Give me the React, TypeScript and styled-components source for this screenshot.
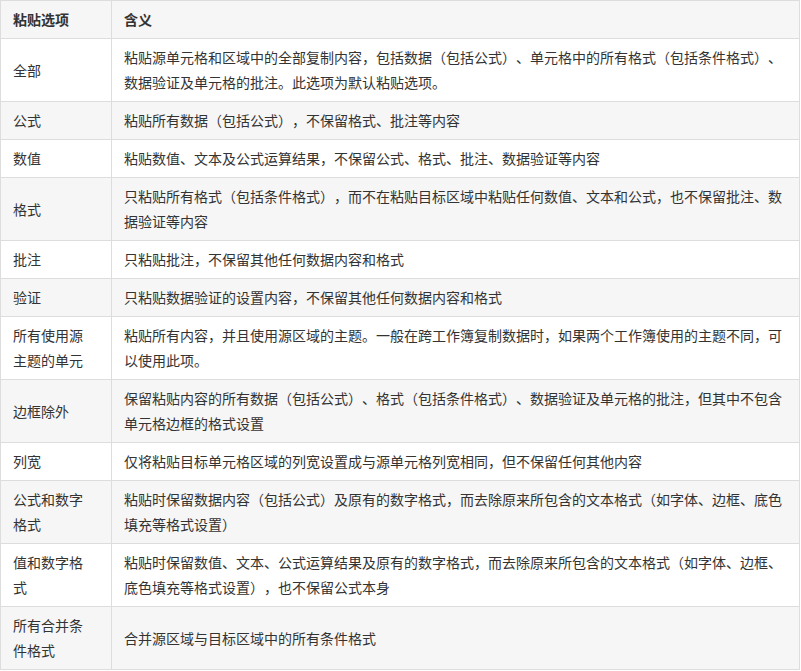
import styled, { createGlobalStyle } from "styled-components";

const Global = createGlobalStyle`
  body { margin: 0; background: #fff; }
`;

const Table = styled.table`
  width: 800px;
  border-collapse: collapse;
  font-family: "Noto Sans CJK SC", sans-serif;
  font-size: 14px;
  line-height: 25px;
  color: #333;
  text-spacing-trim: space-all;
  font-feature-settings: "fwid";
`;

const Row = styled.tr<{ $shade: boolean }>`
  background: ${(p) => (p.$shade ? "#f6f6f6" : "#fff")};
`;

const Th = styled.th`
  text-align: left;
  font-weight: bold;
  padding: 6px 12px 6px 12px;
  border: 1px solid #dddddd;
  height: 24px;
`;

const Td = styled.td<{ $first?: boolean }>`
  padding: ${(p) => (p.$first ? "6px 24px 6px 12px" : "6px 12px")};
  border: 1px solid #dddddd;
  width: ${(p) => (p.$first ? "74px" : "auto")};
  vertical-align: middle;
`;

const rows: [string, string][] = [
  ["全部", "粘贴源单元格和区域中的全部复制内容，包括数据（包括公式）、单元格中的所有格式（包括条件格式）、数据验证及单元格的批注。此选项为默认粘贴选项。"],
  ["公式", "粘贴所有数据（包括公式），不保留格式、批注等内容"],
  ["数值", "粘贴数值、文本及公式运算结果，不保留公式、格式、批注、数据验证等内容"],
  ["格式", "只粘贴所有格式（包括条件格式），而不在粘贴目标区域中粘贴任何数值、文本和公式，也不保留批注、数据验证等内容"],
  ["批注", "只粘贴批注，不保留其他任何数据内容和格式"],
  ["验证", "只粘贴数据验证的设置内容，不保留其他任何数据内容和格式"],
  ["所有使用源主题的单元", "粘贴所有内容，并且使用源区域的主题。一般在跨工作簿复制数据时，如果两个工作簿使用的主题不同，可以使用此项。"],
  ["边框除外", "保留粘贴内容的所有数据（包括公式）、格式（包括条件格式）、数据验证及单元格的批注，但其中不包含单元格边框的格式设置"],
  ["列宽", "仅将粘贴目标单元格区域的列宽设置成与源单元格列宽相同，但不保留任何其他内容"],
  ["公式和数字格式", "粘贴时保留数据内容（包括公式）及原有的数字格式，而去除原来所包含的文本格式（如字体、边框、底色填充等格式设置）"],
  ["值和数字格式", "粘贴时保留数值、文本、公式运算结果及原有的数字格式，而去除原来所包含的文本格式（如字体、边框、底色填充等格式设置），也不保留公式本身"],
  ["所有合并条件格式", "合并源区域与目标区域中的所有条件格式"],
];

export default function App() {
  return (
    <>
      <Global />
      <Table>
        <thead>
          <Row $shade>
            <Th>粘贴选项</Th>
            <Th>含义</Th>
          </Row>
        </thead>
        <tbody>
          {rows.map(([k, v], i) => (
            <Row key={k} $shade={i % 2 === 1}>
              <Td $first>{k}</Td>
              <Td>{v}</Td>
            </Row>
          ))}
        </tbody>
      </Table>
    </>
  );
}
